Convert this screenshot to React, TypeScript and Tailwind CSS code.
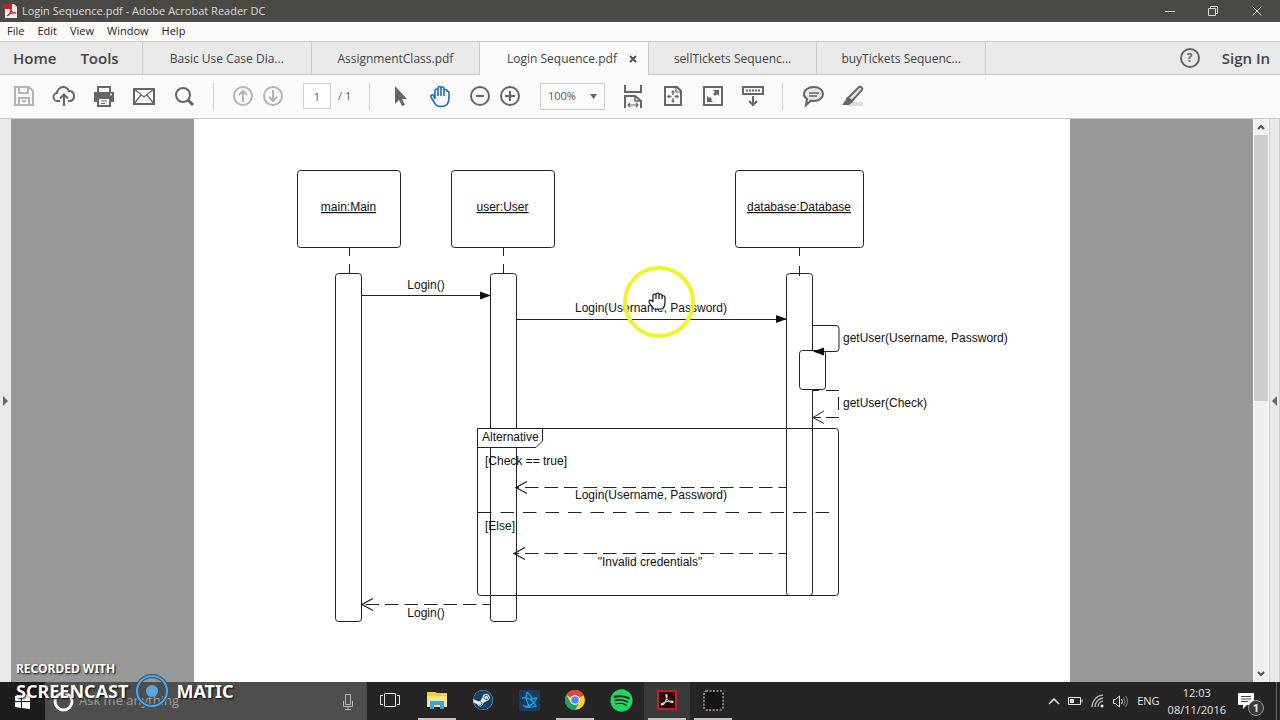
import type { ReactNode } from 'react';
import { FaSpotify, FaSteam } from 'react-icons/fa';

const MENUS = ['File', 'Edit', 'View', 'Window', 'Help'];

const TABS = [
  { title: 'Basic Use Case Dia...', active: false },
  { title: 'AssignmentClass.pdf', active: false },
  { title: 'Login Sequence.pdf', active: true },
  { title: 'sellTickets Sequenc...', active: false },
  { title: 'buyTickets Sequenc...', active: false },
];

function Icon({ size = 24, children }: { size?: number; children: ReactNode }) {
  return (
    <svg
      width={size}
      height={size}
      viewBox={`0 0 ${size} ${size}`}
      fill="none"
      stroke="currentColor"
      strokeWidth="2"
      className="shrink-0"
      aria-hidden="true"
    >
      {children}
    </svg>
  );
}

function ToolButton({ label, className = 'w-10 text-[#666]', children }: { label: string; className?: string; children: ReactNode }) {
  return (
    <button aria-label={label} className={`flex h-10 shrink-0 items-center justify-center ${className}`}>
      {children}
    </button>
  );
}

function Separator() {
  return <div className="ml-[9px] mr-[10px] h-[27px] w-px shrink-0 bg-[#cfcfcf]" />;
}

function TitleBar() {
  return (
    <header className="flex h-[22px] items-center bg-[#4a4945] pl-[3px] text-[#dcdcdc]">
      <svg width="15" height="16" viewBox="0 0 15 16" aria-hidden="true">
        <path d="M2 1h9l3 3v11H2z" fill="#f3efee" />
        <path d="M11 1v3h3z" fill="#c9c5c4" />
        <path d="M0 1h9v5H0z" fill="#c8201c" />
        <path d="M4 13c2-1 4-4 4-7 0 3 2 4 5 4-3-1-6 0-9 3z" fill="none" stroke="#c8201c" strokeWidth="1.3" />
      </svg>
      <h1 className="ml-1 text-[11px]">Login Sequence.pdf - Adobe Acrobat Reader DC</h1>
      <div className="ml-auto flex h-full">
        <button aria-label="Minimize" className="flex w-[43px] items-center justify-center">
          <svg width="10" height="10" stroke="currentColor"><path d="M0 5.5h10" /></svg>
        </button>
        <button aria-label="Restore" className="flex w-[43px] items-center justify-center">
          <svg width="10" height="10" stroke="currentColor" fill="none">
            <path d="M.5 2.5h7v7h-7zM2.5 2V.5h7v7H8" />
          </svg>
        </button>
        <button aria-label="Close" className="flex w-[46px] items-center justify-center">
          <svg width="10" height="10" stroke="currentColor"><path d="M.5.5l9 9M9.5.5l-9 9" /></svg>
        </button>
      </div>
    </header>
  );
}

function MenuBar() {
  return (
    <nav className="flex h-[19px] items-center gap-[13px] bg-[#fbfaf8] pl-[7px] text-[11px] text-[#222]">
      {MENUS.map((menu) => <button key={menu}>{menu}</button>)}
    </nav>
  );
}

function TabBar() {
  return (
    <div className="flex h-[34px] border-t border-[#c8c8c8] bg-[#e9e9e9] text-[#444]">
      <div className="flex w-[142px] shrink-0 items-center gap-6 border-b border-[#c8c8c8] pl-[13px] text-[15px] font-semibold">
        <button>Home</button>
        <button>Tools</button>
      </div>
      <div className="grid w-[843px] grid-cols-5 text-xs">
        {TABS.map((tab) =>
          tab.active ? (
            <div key={tab.title} className="flex items-center justify-center gap-3 border-l border-[#c8c8c8] bg-[#fafafa] pl-4">
              <button>{tab.title}</button>
              <button aria-label="Close tab" className="text-[#555]">
                <Icon size={8}><path d="M1 1l6 6M7 1L1 7" /></Icon>
              </button>
            </div>
          ) : (
            <button key={tab.title} className="whitespace-nowrap border-b border-l border-[#c8c8c8] pt-px">
              {tab.title}
            </button>
          )
        )}
      </div>
      <div className="flex flex-1 items-center justify-end gap-[22px] border-b border-l border-[#c8c8c8] pr-[10px]">
        <button className="flex size-5 items-center justify-center rounded-full border-2 border-[#666] text-xs font-bold text-[#666]">
          ?
        </button>
        <button className="text-[15px] font-semibold">Sign In</button>
      </div>
    </div>
  );
}

function Toolbar() {
  return (
    <div className="flex h-11 items-center border-b border-[#c8c8c8] bg-[#fafafa] pb-px pl-1">
      <ToolButton label="Save" className="w-10 text-[#b4b4b4]">
        <Icon>
          <path d="M3 3h14l4 4v14H3zM7 3v6h9V3M7 21v-7h10v7M10 17h4" />
        </Icon>
      </ToolButton>
      <ToolButton label="Upload">
        <Icon>
          <path d="M8 17H6a4 4 0 0 1-1-8c0-3 3-6 6-6 3 0 5 2 6 4 3 0 5 2 5 5s-2 5-5 5h-1M12 22V11M8 14.5l4-4 4 4" />
        </Icon>
      </ToolButton>
      <ToolButton label="Print">
        <Icon>
          <path d="M2 8h20v10H2z" fill="currentColor" stroke="none" />
          <path d="M6 8V3h12v5" />
          <path d="M6 14h12v8H6z" fill="#fafafa" />
          <path d="M9 17h6M9 19.5h4" strokeWidth="1" />
          <path d="M18 10.5h2" stroke="#fafafa" strokeWidth="1.5" />
        </Icon>
      </ToolButton>
      <ToolButton label="Email">
        <Icon>
          <path d="M2 5h20v15H2z" />
          <path d="M2 5l10 8 10-8M2 20l7-9M22 20l-7-9" strokeWidth="1.3" />
        </Icon>
      </ToolButton>
      <ToolButton label="Find">
        <Icon>
          <circle cx="11" cy="11" r="7" />
          <path d="M16 16l5 5" strokeWidth="3" />
        </Icon>
      </ToolButton>
      <Separator />
      <ToolButton label="Previous page" className="ml-1 w-[30px] text-[#b4b4b4]">
        <Icon>
          <circle cx="12" cy="12" r="9" />
          <path d="M12 18V7M8 11l4-4 4 4" />
        </Icon>
      </ToolButton>
      <ToolButton label="Next page" className="w-[30px] text-[#b4b4b4]">
        <Icon>
          <circle cx="12" cy="12" r="9" />
          <path d="M12 6v11M8 13l4 4 4-4" />
        </Icon>
      </ToolButton>
      <label className="ml-[15px] flex w-[49px] shrink-0 items-center gap-[7px] whitespace-nowrap text-[11px] text-[#555]">
        <input
          aria-label="Page number"
          defaultValue="1"
          className="h-[26px] w-7 shrink-0 border border-[#cfcfcf] bg-white text-center"
        />
        / 1
      </label>
      <div className="w-2" />
      <Separator />
      <ToolButton label="Select">
        <Icon>
          <path d="M7 2v18l4-4 3 6 3-1-3-6h5z" fill="currentColor" stroke="none" />
        </Icon>
      </ToolButton>
      <ToolButton label="Pan" className="w-10 text-[#1c6fb8]">
        <Icon>
          <path
            d="M7 15V6.5a1.5 1.5 0 0 1 3 0V12 4a1.5 1.5 0 0 1 3 0v8-7.500a1.5 1.5 0 0 1 3 0V12 7a1.5 1.5 0 0 1 3 0v0l2 1v6c0 6-3 8.5-8 8.5-4 0-6-2-7-4.500l-3-5c-1-1.500 1-3 2.500-1.500z"
            strokeWidth="1.6"
          />
        </Icon>
      </ToolButton>
      <ToolButton label="Zoom out" className="ml-[5px] w-[30px] text-[#666]">
        <Icon>
          <circle cx="12" cy="12" r="9" />
          <path d="M8 12h8" />
        </Icon>
      </ToolButton>
      <ToolButton label="Zoom in" className="w-[30px] text-[#666]">
        <Icon>
          <circle cx="12" cy="12" r="9" />
          <path d="M7 12h10M12 7v10" />
        </Icon>
      </ToolButton>
      <div className="relative ml-[15px] mr-2 shrink-0">
        <select
          aria-label="Zoom level"
          defaultValue="100%"
          className="block h-[27px] w-[65px] appearance-none border border-[#cfcfcf] bg-[#fbfbfb] pl-[7px] text-[11px] text-[#555]"
        >
          <option>50%</option>
          <option>100%</option>
          <option>200%</option>
        </select>
        <svg width="7" height="5" className="pointer-events-none absolute right-2 top-[11px]" aria-hidden="true">
          <path d="M0 0h7L3.5 5z" fill="#666" />
        </svg>
      </div>
      <ToolButton label="Fit width">
        <Icon>
          <path d="M4 1v7h16V1M4 24V12h10l6 5v7" />
          <path d="M14 12v5h6" strokeWidth="1.5" />
          <path d="M7 21h10M9 19l-2 2 2 2M15 19l2 2-2 2" strokeWidth="1.2" />
        </Icon>
      </ToolButton>
      <ToolButton label="Fit page">
        <Icon>
          <path d="M4 3h12l4 4v14H4z" />
          <path d="M15 3v5h5" strokeWidth="1.2" />
          <path d="M12 7v4M12 14v4M6.5 12.5h4M13.5 12.5h4" strokeWidth="1.3" />
          <path d="M12 6l-2 2.500h4zM12 19l-2-2.500h4zM6 12.5l2.500-2v4zM18 12.5l-2.500-2v4z" fill="currentColor" stroke="none" />
        </Icon>
      </ToolButton>
      <ToolButton label="Full screen">
        <Icon>
          <path d="M3 3h18v18H3z" />
          <path d="M18 6h-6l2 2-2 2 2 2 2-2 2 2zM6 18h6l-2-2 1-1-2-2-1 1-2-2z" fill="currentColor" stroke="none" />
        </Icon>
      </ToolButton>
      <ToolButton label="Toggle toolbar">
        <Icon>
          <path d="M2 3h20v7H2z" />
          <path d="M5 6.5h14" strokeDasharray="2 1" />
          <path d="M12 12v9M8 17l4 4 4-4" />
        </Icon>
      </ToolButton>
      <Separator />
      <ToolButton label="Comment">
        <Icon>
          <path d="M13 3c5 0 9 3 9 7s-4 7-9 7l-3-.5L5 21l1-6c-2-1-3-3-3-5 0-4 4-7 10-7z" fill="#e6e6e6" />
          <path d="M8 9h10M8 12h8" strokeWidth="1.5" />
        </Icon>
      </ToolButton>
      <ToolButton label="Highlight">
        <Icon>
          <path d="M10 18h12v4H6z" fill="#dcdcdc" stroke="none" />
          <path d="M7 14L18 3c2-1 4 1 3 3L11 17z" fill="#e6e6e6" />
          <path d="M6 13l6 5-4 3H1l3-4z" fill="currentColor" stroke="none" />
        </Icon>
      </ToolButton>
    </div>
  );
}

function Participant({ x, width, name }: { x: number; width: number; name: string }) {
  return (
    <>
      <rect x={x + 0.5} y="51.5" width={width} height="77" rx="3" fill="#fff" />
      <text x={x + width / 2} y="92" textAnchor="middle" textDecoration="underline" fill="#111" stroke="none">
        {name}
      </text>
    </>
  );
}

// dashed shaft with an open head, pointing left
function Reply({ from, to, y }: { from: number; to: number; y: number }) {
  return (
    <>
      <path d={`M${from} ${y}H${to}`} strokeDasharray="13.5 6" strokeDashoffset="6" />
      <path d={`M${to + 11} ${y - 6}L${to} ${y}L${to + 11} ${y + 6}`} strokeWidth="1.3" />
    </>
  );
}

function SequenceDiagram() {
  return (
    <svg
      viewBox="0 0 876 563"
      fill="none"
      stroke="#222"
      className="block w-full text-xs [font-family:'Liberation_Sans',Arial,sans-serif]"
      role="img"
      aria-label="Login sequence diagram"
    >
      <Participant x={103} width={103} name="main:Main" />
      <Participant x={257} width={103} name="user:User" />
      <Participant x={541} width={128} name="database:Database" />
      <path d="M155.5 129v8M155.5 145v9M309.5 129v8M309.5 145v9M605.5 129v8M605.5 147v10" />

      <rect x="141.5" y="154.5" width="26" height="348" rx="3" />
      <rect x="296.5" y="154.5" width="26" height="348" rx="3" />
      <rect x="592.5" y="154.5" width="26" height="322" rx="3" />

      <path d="M168 176.5h128M322 200.5h270" />
      <path d="M297 176.5l-11-4v8zM593 200l-11-4v8z" fill="#111" stroke="none" />

      <path d="M618 206.5h24q3 0 3 3v20q0 3-3 3h-23" />
      <rect x="605.5" y="231.5" width="26" height="39" rx="3" fill="#fff" />
      <path d="M619 232.5l11-4v8z" fill="#111" stroke="none" />
      <path d="M618 271.5h7M632 271.5h13M644.5 278v13M645 298.5h-13M627 298.5h-8M630 292l-11 6.5 11 6" />

      <rect x="283.5" y="309.5" width="361" height="167" rx="3" />
      <path d="M283.5 328.5V309.5H348.5V322L342 328.5z" fill="#fff" />
      <path d="M284 393.5h352" strokeDasharray="13.5 9" />
      <Reply from={592} to={322} y={368.5} />
      <Reply from={592} to={320} y={434.5} />
      <Reply from={296} to={168} y={485.5} />

      <g fill="#111" stroke="none">
        <text x="232" y="170" textAnchor="middle">Login()</text>
        <text x="457" y="193" textAnchor="middle">Login(Username, Password)</text>
        <text x="649" y="223">getUser(Username, Password)</text>
        <text x="649" y="288">getUser(Check)</text>
        <text x="288" y="322">Alternative</text>
        <text x="291" y="346">[Check == true]</text>
        <text x="457" y="380" textAnchor="middle">Login(Username, Password)</text>
        <text x="291" y="411">[Else]</text>
        <text x="456" y="447" textAnchor="middle">"Invalid credentials"</text>
        <text x="232" y="498" textAnchor="middle">Login()</text>
      </g>
    </svg>
  );
}

function HandCursor() {
  return (
    <svg
      width="74"
      height="74"
      viewBox="0 0 74 74"
      className="pointer-events-none absolute left-[428px] top-[146px]"
      aria-hidden="true"
    >
      <circle cx="37" cy="37" r="34" fill="none" stroke="#f2f22a" strokeWidth="4" />
      <path
        d="M31 34v-4q2-2 3 0v-1q2-2 3 0v1q2-2 3 0v1q3-1 3 2v4q0 5-3 7h-8l-4-5q-2-3 0-4 2 0 3 2zM34 30v4M37 30v4M40 31v3"
        fill="#fff"
        stroke="#111"
        strokeWidth="1.2"
      />
    </svg>
  );
}

function Document() {
  return (
    <main className="flex flex-1 bg-[#989898]">
      <button aria-label="Show navigation pane" className="flex w-[11px] shrink-0 items-center justify-center bg-[#e9e9ea]">
        <svg width="5" height="10"><path d="M0 0l5 5-5 5z" fill="#666" /></svg>
      </button>
      <div className="flex min-w-0 flex-1 justify-center">
        <div className="relative w-[876px] bg-white">
          <SequenceDiagram />
          <HandCursor />
        </div>
      </div>
      <div className="flex w-4 shrink-0 flex-col border-x border-[#f8f8f8] bg-[#efefef] text-[#555]">
        <button aria-label="Scroll up" className="flex h-4 items-center justify-center">
          <Icon size={8}><path d="M1 6l3-3 3 3" /></Icon>
        </button>
        <div className="flex-1">
          <div className="h-1/2 bg-[#cdcdcd]" />
        </div>
        <button aria-label="Scroll down" className="flex h-4 items-center justify-center">
          <Icon size={8}><path d="M1 2l3 3 3-3" /></Icon>
        </button>
      </div>
      <button aria-label="Show tools pane" className="flex w-[11px] shrink-0 items-center justify-center border-x border-[#cfcfcf] bg-[#e9e9e9]">
        <svg width="5" height="10"><path d="M5 0L0 5l5 5z" fill="#666" /></svg>
      </button>
    </main>
  );
}

function TaskButton({ label, open, className = 'w-[46px]', children }: { label: string; open?: boolean; className?: string; children: ReactNode }) {
  return (
    <button aria-label={label} className={`flex shrink-0 flex-col items-center ${className}`}>
      <span className="flex flex-1 items-center">{children}</span>
      <span className={open ? 'h-0.5 w-[38px] bg-[#c9c0c0]' : 'h-0.5'} />
    </button>
  );
}

function Taskbar() {
  return (
    <footer className="flex h-[38px] bg-[#262424] text-[#e6e6e6]">
      <button aria-label="Start" className="flex w-[45px] shrink-0 items-center justify-center bg-[#1d1c1b]">
        <svg width="15" height="15" viewBox="0 0 15 15" fill="#fff">
          <path d="M0 2l6-1v6H0zM7 1l8-1v7H7zM0 8h6v6l-6-1zM7 8h8v7l-8-1z" />
        </svg>
      </button>
      <label className="flex w-[322px] shrink-0 items-center bg-[#4f4e4d] pl-2">
        <svg width="21" height="21" aria-hidden="true">
          <circle cx="10.5" cy="10.5" r="8.5" fill="none" stroke="#f4f4f4" strokeWidth="3" />
        </svg>
        <input
          aria-label="Search"
          placeholder="Ask me anything"
          className="ml-[5px] w-0 flex-1 text-[13px] placeholder:text-[#a0a0a0]"
        />
        <svg width="12" height="17" viewBox="0 0 12 17" fill="none" stroke="#b8b8b8" className="mr-[13px]" aria-hidden="true">
          <path d="M3.5 1.5h5v10h-5zM1.5 8v5.500h9V8M6 14v2.500M3 16.5h6" />
        </svg>
      </label>
      <TaskButton label="Task View">
        <svg width="20" height="14" viewBox="0 0 20 14" fill="none" stroke="#e6e6e6">
          <path d="M4.5.5h11v13h-11zM3 2.5H.5v9H3M17 2.5h2.500v9H17" />
        </svg>
      </TaskButton>
      <TaskButton label="File Explorer" open className="ml-px w-[46px]">
        <svg width="20" height="18" viewBox="0 0 20 18">
          <path d="M0 1h8l2 1h10v14H0z" fill="#f2c94f" />
          <path d="M0 5h20v11H0z" fill="#fbe38c" />
          <path d="M3 18v-8h14v8h-4v-4H7v4z" fill="#3aa3dc" />
        </svg>
      </TaskButton>
      <TaskButton label="Steam">
        <span className="block rounded-full bg-[#e3e9ef] bg-clip-content p-px">
          <FaSteam size={20} color="#16426e" />
        </span>
      </TaskButton>
      <TaskButton label="Battle.net">
        <svg width="21" height="21" viewBox="0 0 21 21" fill="none" stroke="#19a5dd">
          <path d="M0 0h21v21H0z" fill="#1b3a60" stroke="none" />
          <path d="M3 8c5-1 10 1 14 8-6 2-11 2-13-1M8 2c-2 5 0 11 3 15M8 2c3 2 5 5 5 9M18 8c-3 6-8 9-12 8M18 8c-3 0-5 0-7 2" strokeWidth="1.3" />
        </svg>
      </TaskButton>
      <TaskButton label="Chrome" open>
        <svg width="20" height="20" viewBox="0 0 20 20">
          <circle cx="10" cy="10" r="10" fill="#fdd03b" />
          <path d="M10 10L1.3 5A10 10 0 0 1 18.7 5z" fill="#dd4b3e" />
          <path d="M1.3 5A10 10 0 0 0 10 20l4.300-7.500L10 10 5.7 12.5z" fill="#1ea362" />
          <path d="M10 5h8.700L10 10z" fill="#dd4b3e" />
          <circle cx="10" cy="10" r="4.8" fill="#fff" />
          <circle cx="10" cy="10" r="3.8" fill="#4a8af4" />
        </svg>
      </TaskButton>
      <TaskButton label="Spotify">
        <FaSpotify size={23} color="#20d564" />
      </TaskButton>
      <TaskButton label="Acrobat Reader" open className="w-[46px] bg-[#3b3939]">
        <svg width="20" height="20" viewBox="0 0 20 20" fill="none">
          <path d="M1 1h18v18H1z" fill="#2a0908" stroke="#c0211f" strokeWidth="2" />
          <path
            d="M5 15c2 0 5-5 5-9 0-2-1.500-2-1 0 .5 3 3 6 6 6.500 2 0 1-1.500-1-1.500-3 0-6 1-9 2.500-1 .5-1 1.500 0 1.500z"
            stroke="#f2eded"
            strokeWidth="1.1"
          />
        </svg>
      </TaskButton>
      <TaskButton label="Screen recorder" open>
        <svg width="21" height="21" viewBox="0 0 21 21">
          <rect x="1" y="1" width="19" height="19" rx="2" fill="#161515" stroke="#e6e6e6" strokeDasharray="2 1.5" />
        </svg>
      </TaskButton>
      <div className="ml-auto flex items-center gap-2 text-[11px]">
        <button aria-label="Show hidden icons">
          <svg width="12" height="7" fill="none" stroke="currentColor" strokeWidth="1.5"><path d="M1 6l5-5 5 5" /></svg>
        </button>
        <svg width="15" height="10" viewBox="0 0 15 10" fill="none" stroke="currentColor" aria-label="Battery">
          <path d="M.5 1.5h12v7H.5zM14 3.5v3" />
          <path d="M2 3h4v4H2z" fill="currentColor" stroke="none" />
        </svg>
        <svg width="14" height="14" viewBox="0 0 14 14" fill="none" stroke="#b5b5b5" aria-label="Wi-Fi">
          <path d="M1 13A12 12 0 0 1 12 1M4 13a9 9 0 0 1 8-9M7 13a6 6 0 0 1 5-6" strokeWidth="1.3" />
          <circle cx="11" cy="12" r="1.5" fill="#eee" stroke="none" />
        </svg>
        <svg width="16" height="13" viewBox="0 0 16 13" fill="none" stroke="currentColor" aria-label="Volume">
          <path d="M.5 4.5h2l4-3.500v11l-4-3.500h-2z" />
          <path d="M8.5 4q2 2.500 0 5" />
          <path d="M10.5 2.5q3 4 0 8M12.5 1q4 5.500 0 11" stroke="#888" />
        </svg>
        <button>ENG</button>
        <button className="mr-1 text-center leading-[17px]">
          12:03<br />08/11/2016
        </button>
        <button aria-label="Notifications" className="relative mr-2 size-[22px]">
          <svg width="16" height="16" viewBox="0 0 16 16">
            <path d="M0 0h16v12H9l-4 4v-4H0z" fill="#fff" />
            <path d="M3 3.5h10M3 6h10M3 8.5h7" stroke="#444" />
          </svg>
          <span className="absolute -bottom-1 -right-1 flex size-4 items-center justify-center rounded-full border border-[#999] bg-[#3a3838] text-[11px] font-bold">
            1
          </span>
        </button>
        <div className="h-[38px] w-1 border-l border-[#666]" />
      </div>
    </footer>
  );
}

function Watermark() {
  return (
    <div className="pointer-events-none absolute bottom-3 left-4 font-bold text-white [font-family:'Noto_Sans',sans-serif] [text-shadow:1px_1px_2px_#000]">
      <p className="text-xs leading-[10px]">RECORDED WITH</p>
      <div className="flex items-center gap-[7px] text-lg leading-8">
        SCREENCAST
        <svg width="34" height="34" viewBox="0 0 34 34" aria-hidden="true">
          <circle cx="17" cy="17" r="15" fill="none" stroke="#24577e" strokeWidth="4" />
          <circle cx="17" cy="17" r="15" fill="none" stroke="#5aa5e0" strokeWidth="2" />
          <circle cx="17" cy="17" r="6" fill="#5aa5e0" />
        </svg>
        MATIC
      </div>
    </div>
  );
}

export default function App() {
  return (
    <div className="relative flex min-h-screen flex-col overflow-hidden [font-family:'Open_Sans','Noto_Sans',sans-serif]">
      <TitleBar />
      <MenuBar />
      <TabBar />
      <Toolbar />
      <Document />
      <Taskbar />
      <Watermark />
    </div>
  );
}
